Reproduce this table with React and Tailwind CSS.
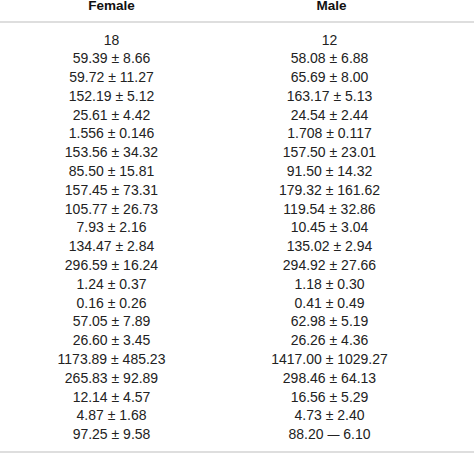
import React from "react";

const female = [
  "18",
  "59.39 ± 8.66",
  "59.72 ± 11.27",
  "152.19 ± 5.12",
  "25.61 ± 4.42",
  "1.556 ± 0.146",
  "153.56 ± 34.32",
  "85.50 ± 15.81",
  "157.45 ± 73.31",
  "105.77 ± 26.73",
  "7.93 ± 2.16",
  "134.47 ± 2.84",
  "296.59 ± 16.24",
  "1.24 ± 0.37",
  "0.16 ± 0.26",
  "57.05 ± 7.89",
  "26.60 ± 3.45",
  "1173.89 ± 485.23",
  "265.83 ± 92.89",
  "12.14 ± 4.57",
  "4.87 ± 1.68",
  "97.25 ± 9.58",
];

const male = [
  "12",
  "58.08 ± 6.88",
  "65.69 ± 8.00",
  "163.17 ± 5.13",
  "24.54 ± 2.44",
  "1.708 ± 0.117",
  "157.50 ± 23.01",
  "91.50 ± 14.32",
  "179.32 ± 161.62",
  "119.54 ± 32.86",
  "10.45 ± 3.04",
  "135.02 ± 2.94",
  "294.92 ± 27.66",
  "1.18 ± 0.30",
  "0.41 ± 0.49",
  "62.98 ± 5.19",
  "26.26 ± 4.36",
  "1417.00 ± 1029.27",
  "298.46 ± 64.13",
  "16.56 ± 5.29",
  "4.73 ± 2.40",
  null,
];

export default function App() {
  return (
    <div className="w-[474px] h-[474px] bg-white overflow-hidden font-['Liberation_Sans',Arial,sans-serif] text-[#222]">
      <div className="grid grid-cols-[223px_213px] h-[21px]">
        <div className="text-center text-[13.5px] leading-[12px] font-bold text-[#111]">Female</div>
        <div className="pl-[4px] text-center text-[13.5px] leading-[12px] font-bold text-[#111]">Male</div>
      </div>
      <div className="h-[2px] bg-[#dedede]" />
      <div className="pt-[7.5px] grid grid-cols-[223px_213px] text-[14px] leading-[18.8px]">
        <div className="flex flex-col items-center">
          {female.map((v, i) => (
            <div key={i}>{v}</div>
          ))}
        </div>
        <div className="flex flex-col items-center">
          {male.map((v, i) =>
            v === null ? (
              <div key={i}>
                88.20 <span className="text-[12px]">—</span> 6.10
              </div>
            ) : (
              <div key={i}>{v}</div>
            )
          )}
        </div>
      </div>
      <div className="mt-[6px] h-[2px] bg-[#dedede]" />
    </div>
  );
}
